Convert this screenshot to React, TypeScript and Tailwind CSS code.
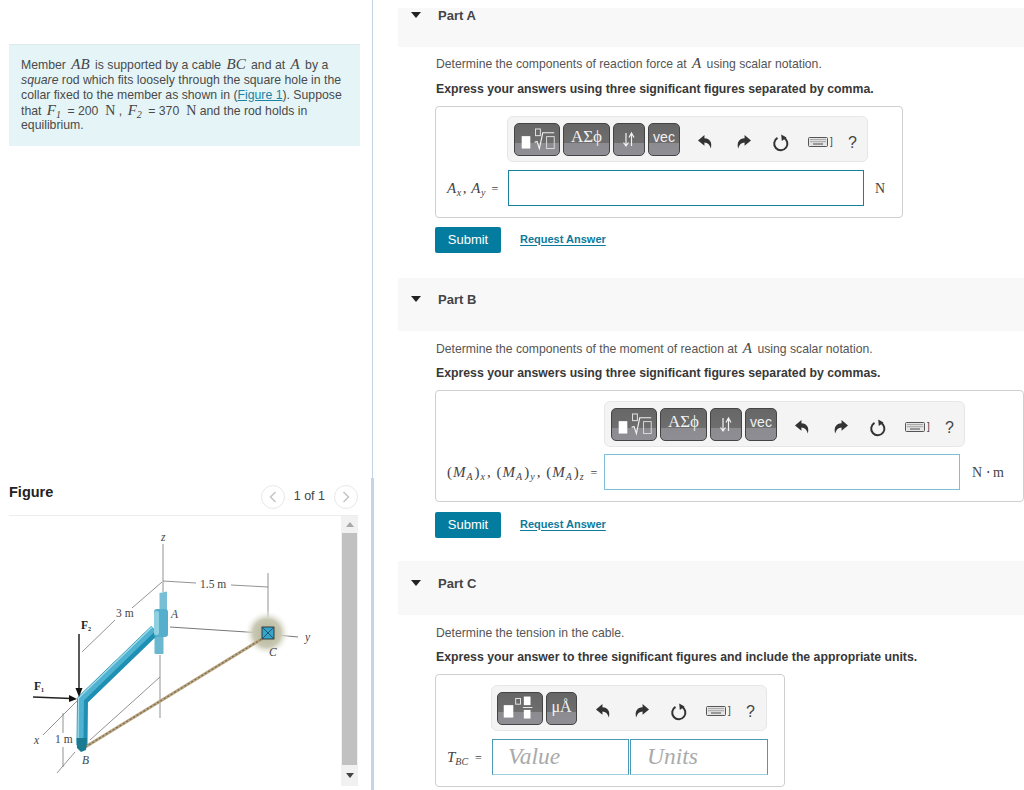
import React from "react";

const sans = "font-['Liberation_Sans',Arial,sans-serif]";
const serif = "font-['Liberation_Serif','Times_New_Roman',serif]";

function V({ children }: { children: React.ReactNode }) {
  return <span className={`${serif} italic text-[15px] leading-none px-[2px] text-[#444]`}>{children}</span>;
}
function Sub({ children }: { children: React.ReactNode }) {
  return <span className="relative top-[3px] text-[10px] leading-none mr-[1px]">{children}</span>;
}
function Un({ children }: { children: React.ReactNode }) {
  return <span className={`${serif} text-[14px] leading-none text-[#444]`}>{children}</span>;
}

function Undo({ flip }: { flip?: boolean }) {
  return (
    <svg width="15" height="15" viewBox="0 0 14 14" className={`mt-[4px] ${flip ? "-scale-x-100" : ""}`}>
      <path d="M0 6 L6 1 L6 4 C11 4 13.5 8 12 13.5 C11 10 9 8 6 8 L6 11 Z" fill="#333" />
    </svg>
  );
}
function Reset() {
  return (
    <svg width="18" height="18" viewBox="0 0 18 18" className="mt-[8px]">
      <path d="M11.5 3.6 A6.6 6.6 0 1 1 5.5 3.9" fill="none" stroke="#333" strokeWidth="2" />
      <path d="M9.2 0.5 L14.5 3.6 L9.8 7 Z" fill="#333" />
    </svg>
  );
}
function Keyboard() {
  return (
    <svg width="20" height="10" viewBox="0 0 20 10">
      <rect x="0.5" y="0.5" width="19" height="9" rx="1" fill="#e4e4e4" stroke="#555" />
      <path d="M2.5 2.6 H17.5 M2.5 4.7 H17.5" stroke="#666" strokeWidth="1" strokeDasharray="1 1" />
      <path d="M5 7 H15" stroke="#666" strokeWidth="1.2" />
    </svg>
  );
}

const btn =
  "flex items-center justify-center h-[33px] rounded-[5px] border border-[#444] bg-[linear-gradient(#666_0,#6e6e6e_62%,#8b8b90_62%,#8e8e94_100%)] text-[#f2f2f2] overflow-hidden";

function TemplateBtn() {
  return (
    <div className={`${btn} w-[46px]`}>
      <svg width="46" height="32" viewBox="0 0 46 32">
        <rect x="7" y="13" width="9" height="13" fill="#fff" />
        <rect x="21.5" y="5.5" width="5" height="7" fill="none" stroke="#e8e8e8" />
        <path d="M20.5 19.5 L23 18.5 L25.5 26 L29 9.5 H41" fill="none" stroke="#f2f2f2" strokeWidth="1.2" />
        <rect x="33" y="13.5" width="8" height="12.5" fill="none" stroke="#ddd" />
      </svg>
    </div>
  );
}
function ArrowsBtn() {
  return (
    <div className={`${btn} w-[32px] ml-[3px]`}>
      <svg width="30" height="31" viewBox="0 0 30 31">
        <path d="M12 9 V21 M9.5 18.5 L12 22 L14.5 18.5" fill="none" stroke="#f2f2f2" strokeWidth="1.2" />
        <path d="M17.5 22 V10 M15 13.5 L17.5 9 L20 13.5" fill="none" stroke="#f2f2f2" strokeWidth="1.2" />
      </svg>
    </div>
  );
}
function Tools({ gap }: { gap: number }) {
  return (
    <>
      <div className="flex items-center justify-center w-[38px]" style={{ marginLeft: gap }}>
        <Undo />
      </div>
      <div className="flex items-center justify-center w-[38px]">
        <Undo flip />
      </div>
      <div className="flex items-center justify-center w-[38px]">
        <Reset />
      </div>
      <div className="flex items-center ml-[8px] w-[30px] mt-[5px]">
        <Keyboard />
        <span className="ml-[2px] text-[10px] text-[#444] leading-none">]</span>
      </div>
      <span className="ml-[10px] mt-[8px] text-[16px] text-[#444] leading-none">?</span>
    </>
  );
}
function MathToolbar() {
  return (
    <div className="flex items-center w-[361px] h-[46px] pl-[6px] rounded-[6px] bg-[#f4f4f4] border border-[#e6e6e6]">
      <TemplateBtn />
      <div className={`${btn} w-[47px] ml-[3px] ${serif} text-[17px] pb-[4px]`}>ΑΣϕ</div>
      <ArrowsBtn />
      <div className={`${btn} w-[32px] ml-[3px] ${sans} text-[14px] pb-[3px]`}>vec</div>
      <Tools gap={6} />
    </div>
  );
}
function UnitToolbar() {
  return (
    <div className="flex items-center w-[276px] h-[46px] pl-[5px] rounded-[6px] bg-[#f4f4f4] border border-[#e6e6e6]">
      <div className={`${btn} w-[46px]`}>
        <svg width="46" height="32" viewBox="0 0 46 32">
          <rect x="6" y="13" width="10" height="13" fill="#fff" />
          <rect x="18.5" y="6" width="5" height="6" fill="none" stroke="#e8e8e8" />
          <rect x="27" y="4" width="7" height="9" fill="#fff" />
          <path d="M26 15.5 H36" stroke="#eee" />
          <rect x="27" y="18" width="7" height="9" fill="#fff" />
        </svg>
      </div>
      <div className={`${btn} w-[31px] ml-[3px] ${serif} text-[16px] pb-[3px]`}>μÅ</div>
      <Tools gap={7} />
    </div>
  );
}

function PartBar({ title, h, top }: { title: string; h: string; top: number }) {
  return (
    <div className={`flex items-start ${h} bg-[#f8f8f8]`}>
      <svg width="10" height="6" viewBox="0 0 10 6" className="ml-[13px] shrink-0" style={{ marginTop: top + 4 }}>
        <path d="M0 0 H10 L5 6 Z" fill="#222" />
      </svg>
      <span className="ml-[17px] text-[13px] text-[#444] font-bold leading-[15px]" style={{ marginTop: top }}>{title}</span>
    </div>
  );
}

function Instr({ a, b, mt, gap }: { a: React.ReactNode; b: string; mt: string; gap: string }) {
  return (
    <div className={`ml-[38px] ${mt}`}>
      <div className="text-[12.2px] leading-[16px] text-[#555] whitespace-nowrap">{a}</div>
      <div className={`${gap} text-[12.28px] leading-[16px] font-bold text-[#383838] whitespace-nowrap`}>{b}</div>
    </div>
  );
}

function SubmitRow({ mt }: { mt: string }) {
  return (
    <div className={`flex items-center ml-[37px] ${mt} h-[26px]`}>
      <div className="flex items-center justify-center w-[66px] h-[26px] rounded-[2px] bg-[#047c9f] text-white text-[13px] font-medium">Submit</div>
      <span className="ml-[19px] -mt-[2px] text-[11px] font-bold text-[#0d7a9c] underline underline-offset-2">Request Answer</span>
    </div>
  );
}

function FigureArt() {
  return (
    <svg width="331" height="268" viewBox="9 517 331 268" className="block">
      <defs>
        <radialGradient id="glow">
          <stop offset="0%" stopColor="#b0b094" />
          <stop offset="60%" stopColor="#c9c9b4" />
          <stop offset="100%" stopColor="#ffffff" stopOpacity="0" />
        </radialGradient>
      </defs>
      <g stroke="#777" strokeWidth="0.8" fill="none">
        <path d="M163 544 V592" />
        <path d="M160 655 V718" />
        <path d="M163 581 L196 583 M231 585 L268 587 M268 573 V617" />
        <path d="M162 582 L132 608 M115 620 L82 652" />
        <path d="M77 701 L43 735" />
        <path d="M63 713 V733 M63 747 V767 M75 752 L57 773" />
        <path d="M90 740 L160 677" />
        <path d="M170 627 L262 633" stroke="#555" />
        <path d="M277 635 L298 637" stroke="#555" />
      </g>
      <circle cx="267" cy="633" r="23" fill="url(#glow)" />
      <path d="M82 749 L265 637" stroke="#b8a582" strokeWidth="3" />
      <path d="M82 749 L265 637" stroke="#7e6b4c" strokeWidth="1.2" strokeDasharray="2 2" />
      <path d="M159.5 593 L167 591.5 V611 H159.5 Z" fill="#78bfd5" />
      <rect x="154.5" y="636" width="9" height="18" rx="1" fill="#69b8d0" />
      <path d="M155 630 L82.5 700 L82 745" fill="none" stroke="#1f8fb3" strokeWidth="11" strokeLinejoin="round" />
      <path d="M153.5 628.5 L81 699 L80.5 745" fill="none" stroke="#4fb2d0" strokeWidth="6" strokeLinejoin="round" />
      <path d="M152 627 L78.5 698 L78 742" fill="none" stroke="#a8dde9" strokeWidth="1.2" />
      <rect x="154" y="609" width="14" height="28" rx="3" fill="#55aecb" />
      <rect x="154" y="611" width="5" height="24" rx="2" fill="#8fd0e1" />
      <path d="M76.5 738 H87 L86 750 L81 752 L77 748 Z" fill="#1b7b93" />
      <rect x="262" y="627" width="12" height="12" fill="#35a5cb" stroke="#222" strokeWidth="0.8" />
      <path d="M262 627 L274 639 M274 627 L262 639" stroke="#1f4c5c" strokeWidth="0.9" />
      <path d="M79 634 V690" stroke="#222" strokeWidth="1.5" />
      <path d="M75.5 688 H82.5 L79 697 Z" fill="#111" />
      <path d="M33 697 L71 698.6" stroke="#222" strokeWidth="1.5" />
      <path d="M69 695 L77 699 L69 702 Z" fill="#111" />
      <g className={serif} fill="#444" fontSize="11.5">
        <text x="161" y="541" fontStyle="italic">z</text>
        <text x="200" y="588">1.5 m</text>
        <text x="116" y="617">3 m</text>
        <text x="171" y="618" fontStyle="italic">A</text>
        <text x="269" y="656" fontStyle="italic">C</text>
        <text x="305" y="641" fontStyle="italic">y</text>
        <text x="34" y="744" fontStyle="italic">x</text>
        <text x="55" y="743">1 m</text>
        <text x="82" y="764" fontStyle="italic">B</text>
        <text x="81" y="629" fontWeight="700" fill="#222">F<tspan fontSize="6" dy="2">2</tspan></text>
        <text x="34" y="690" fontWeight="700" fill="#222">F<tspan fontSize="6" dy="2">1</tspan></text>
      </g>
    </svg>
  );
}

function Chevron({ left }: { left?: boolean }) {
  return (
    <div className="flex items-center justify-center w-[24px] h-[24px] rounded-full border border-[#e8e8e8]">
      <svg width="8" height="12" viewBox="0 0 8 12">
        <path d={left ? "M6.5 1 L1.5 6 L6.5 11" : "M1.5 1 L6.5 6 L1.5 11"} fill="none" stroke="#c4c4c4" strokeWidth="1.5" />
      </svg>
    </div>
  );
}

const mathLabel = `${serif} italic text-[15px] text-[#444] whitespace-nowrap`;

export default function App() {
  return (
    <div className={`flex w-[1024px] h-[790px] overflow-hidden bg-white ${sans}`}>
      <div className="flex flex-col w-[374px] shrink-0">
        <div className="w-[373px] h-[478px] pt-[44px] border-r border-[#c5d5e8]">
          <div className="ml-[9px] w-[351px] h-[102px] pt-[12px] pl-[12px] bg-[#e5f5f7] border-t border-[#dfe8ea] text-[12.25px] leading-[15.25px] text-[#4a4a4a] whitespace-nowrap">
            <div className="h-[15px]">Member <V>AB</V> is supported by a cable <V>BC</V> and at <V>A</V> by a</div>
            <div className="h-[16px] pt-[1px]"><i>square</i> rod which fits loosely through the square hole in the</div>
            <div className="h-[15px]">collar fixed to the member as shown in (<span className="text-[#1a83a3] underline">Figure 1</span>). Suppose</div>
            <div className="h-[15px]">that <V>F<Sub>1</Sub></V> = 200 <Un>&nbsp;N</Un> , <V>F<Sub>2</Sub></V> = 370 <Un>&nbsp;N</Un> and the rod holds in</div>
            <div className="h-[15px]">equilibrium.</div>
          </div>
        </div>
        <div className="flex-1 pl-[9px] pr-[14px] border-r-[3px] border-[#c5d5e8]">
          <div className="flex items-center h-[38px] w-[349px] border-b border-[#ececec]">
            <span className="text-[14.5px] font-bold text-[#222] -mt-[7px]">Figure</span>
            <div className="flex items-center ml-auto">
              <Chevron left />
              <span className="mx-[9px] text-[12.5px] text-[#444]">1 of 1</span>
              <Chevron />
            </div>
          </div>
          <div className="flex w-[349px] h-[270px]">
            <div className="w-[332px] pt-[1px]">
              <FigureArt />
            </div>
            <div className="flex flex-col items-center w-[17px] bg-[#f1f1f1]">
              <div className="flex items-center justify-center h-[17px]">
                <svg width="8" height="5" viewBox="0 0 8 5"><path d="M0 5 L4 0 L8 5 Z" fill="#a8a8a8" /></svg>
              </div>
              <div className="w-[15px] h-[232px] bg-[#c1c1c1]" />
              <div className="flex items-center justify-center h-[20px]">
                <svg width="8" height="5" viewBox="0 0 8 5"><path d="M0 0 L8 0 L4 5 Z" fill="#444" /></svg>
              </div>
            </div>
          </div>
        </div>
      </div>

      <div className="flex-1 pl-[24px] pt-[8px] min-w-0">
        <PartBar title="Part A" h="h-[39px]" top={0} />
        <Instr
          mt="mt-[9px]"
          gap="mt-[9px]"
          a={<>Determine the components of reaction force at <V>A</V> using scalar notation.</>}
          b="Express your answers using three significant figures separated by comma."
        />
        <div className="ml-[37px] mt-[9px] w-[468px] h-[112px] pt-[9px] rounded-[4px] border border-[#cfcfcf]">
          <div className="ml-[71px]"><MathToolbar /></div>
          <div className="flex items-center mt-[8px] h-[36px]">
            <div className={`w-[72px] pl-[11px] ${mathLabel} tracking-[0.6px]`}>
              A<Sub>x</Sub>, A<Sub>y</Sub> <span className="not-italic text-[12px]">=</span>
            </div>
            <div className="w-[356px] h-[36px] border border-[#1a7f9c]" />
            <span className={`ml-[11px] ${serif} text-[14px] text-[#444]`}>N</span>
          </div>
        </div>
        <SubmitRow mt="mt-[9px]" />

        <div className="mt-[25px]">
          <PartBar title="Part B" h="h-[53px]" top={14} />
        </div>
        <Instr
          mt="mt-[10px]"
          gap="mt-[8px]"
          a={<>Determine the components of the moment of reaction at <V>A</V> using scalar notation.</>}
          b="Express your answers using three significant figures separated by commas."
        />
        <div className="ml-[37px] mt-[9px] w-[589px] h-[112px] pt-[10px] rounded-[4px] border border-[#cfcfcf]">
          <div className="ml-[168px]"><MathToolbar /></div>
          <div className="flex items-center mt-[7px] h-[36px]">
            <div className={`w-[168px] pl-[11px] ${mathLabel} tracking-[1px]`}>
              <span className="not-italic">(</span>M<Sub>A</Sub><span className="not-italic">)</span><Sub>x</Sub>, <span className="not-italic">(</span>M<Sub>A</Sub><span className="not-italic">)</span><Sub>y</Sub>, <span className="not-italic">(</span>M<Sub>A</Sub><span className="not-italic">)</span><Sub>z</Sub> <span className="not-italic text-[12px]">=</span>
            </div>
            <div className="w-[356px] h-[36px] border border-[#7fbfd6]" />
            <span className={`ml-[12px] ${serif} text-[14px] text-[#444] whitespace-nowrap`}>N ⋅ m</span>
          </div>
        </div>
        <SubmitRow mt="mt-[10px]" />

        <div className="mt-[23px]">
          <PartBar title="Part C" h="h-[54px]" top={15} />
        </div>
        <Instr
          mt="mt-[10px]"
          gap="mt-[8px]"
          a="Determine the tension in the cable."
          b="Express your answer to three significant figures and include the appropriate units."
        />
        <div className="ml-[37px] mt-[9px] w-[350px] h-[113px] pt-[10px] rounded-[4px] border border-[#cfcfcf]">
          <div className="ml-[55px]"><UnitToolbar /></div>
          <div className="flex items-center mt-[8px] h-[36px]">
            <div className={`w-[56px] pl-[11px] ${mathLabel}`}>
              T<Sub>BC</Sub> <span className="not-italic text-[12px] ml-[2px]">=</span>
            </div>
            <div className={`flex items-center w-[137px] h-[36px] pl-[15px] border border-[#4a9ab5] border-b-[#9dd0dd] ${serif} italic text-[23.5px] text-[#aaa]`}>Value</div>
            <div className={`flex items-center w-[138px] h-[36px] ml-[1px] pl-[16px] border border-[#4a9ab5] border-b-[#9dd0dd] ${serif} italic text-[23.5px] text-[#aaa]`}>Units</div>
          </div>
        </div>
      </div>
    </div>
  );
}
